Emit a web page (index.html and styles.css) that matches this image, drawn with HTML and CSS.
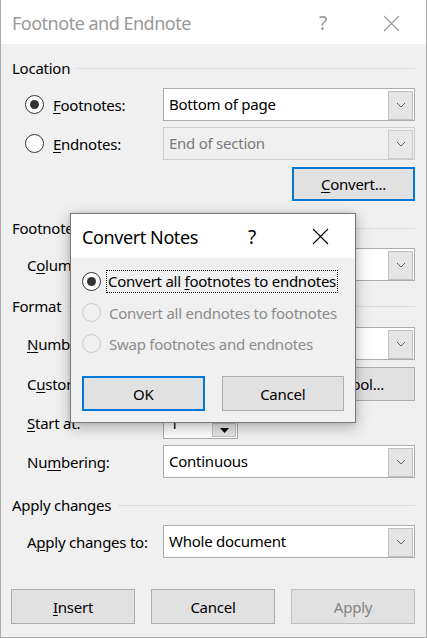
FILE: index.html
```html
<!DOCTYPE html>
<html>
<head>
<meta charset="utf-8">
<title>Footnote and Endnote</title>
<link rel="stylesheet" href="styles.css">
</head>
<body>
<div class="window">
  <div class="titlebar">
    <span class="title">Footnote and Endnote</span>
    <span class="tb-help">?</span>
    <span class="tb-close">
      <svg width="17" height="17" viewBox="0 0 17 17"><path d="M1 1 L16 16 M16 1 L1 16" stroke="#999" stroke-width="1.1" fill="none"/></svg>
    </span>
  </div>

  <div class="content">
    <div class="group-head first"><span class="gh-text">Location</span><span class="gh-line"></span></div>

    <div class="row">
      <div class="radio-label"><span class="radio checked"></span><span><u>F</u>ootnotes:</span></div>
      <div class="select">
        <span class="sel-text">Bottom of page</span>
        <span class="dd"><svg width="10" height="6" viewBox="0 0 10 6"><path d="M1 1 L5 5 L9 1" stroke="#606060" stroke-width="1" fill="none"/></svg></span>
      </div>
    </div>

    <div class="row r6">
      <div class="radio-label"><span class="radio"></span><span><u>E</u>ndnotes:</span></div>
      <div class="select disabled">
        <span class="sel-text">End of section</span>
        <span class="dd"><svg width="10" height="6" viewBox="0 0 10 6"><path d="M1 1 L5 5 L9 1" stroke="#606060" stroke-width="1" fill="none"/></svg></span>
      </div>
    </div>

    <div class="row-right r7">
      <button class="btn default convert"><u>C</u>onvert...</button>
    </div>

    <div class="group-head"><span class="gh-text">Footnote layout</span><span class="gh-line"></span></div>

    <div class="row">
      <div class="label">C<u>o</u>lumns:</div>
      <div class="select">
        <span class="sel-text">Match section layout</span>
        <span class="dd"><svg width="10" height="6" viewBox="0 0 10 6"><path d="M1 1 L5 5 L9 1" stroke="#606060" stroke-width="1" fill="none"/></svg></span>
      </div>
    </div>

    <div class="group-head g2"><span class="gh-text">Format</span><span class="gh-line"></span></div>

    <div class="row r11">
      <div class="label"><u>N</u>umber format:</div>
      <div class="select">
        <span class="sel-text">1, 2, 3, ...</span>
        <span class="dd"><svg width="10" height="6" viewBox="0 0 10 6"><path d="M1 1 L5 5 L9 1" stroke="#606060" stroke-width="1" fill="none"/></svg></span>
      </div>
    </div>

    <div class="row r7 tall">
      <div class="label">C<u>u</u>stom mark:</div>
      <div class="custom-field">
        <span class="text-input"></span>
        <button class="btn symbol"><u>S</u>ymbol...</button>
      </div>
    </div>

    <div class="row r5">
      <div class="label"><u>S</u>tart at:</div>
      <div class="field">
        <div class="spin">
          <span class="spin-text">1</span>
          <span class="spin-btns">
            <span class="spin-btn"><svg width="9" height="5" viewBox="0 0 9 5"><path d="M0 5 L4.5 0 L9 5 Z" fill="#000"/></svg></span>
            <span class="spin-btn"><svg width="9" height="5" viewBox="0 0 9 5"><path d="M0 0 L9 0 L4.5 5 Z" fill="#000"/></svg></span>
          </span>
        </div>
      </div>
    </div>

    <div class="row r6">
      <div class="label">Nu<u>m</u>bering:</div>
      <div class="select">
        <span class="sel-text">Continuous</span>
        <span class="dd"><svg width="10" height="6" viewBox="0 0 10 6"><path d="M1 1 L5 5 L9 1" stroke="#606060" stroke-width="1" fill="none"/></svg></span>
      </div>
    </div>

    <div class="group-head"><span class="gh-text">Apply changes</span><span class="gh-line"></span></div>

    <div class="row">
      <div class="label">A<u>p</u>ply changes to:</div>
      <div class="select">
        <span class="sel-text">Whole document</span>
        <span class="dd"><svg width="10" height="6" viewBox="0 0 10 6"><path d="M1 1 L5 5 L9 1" stroke="#606060" stroke-width="1" fill="none"/></svg></span>
      </div>
    </div>

    <div class="buttons">
      <button class="btn"><u>I</u>nsert</button>
      <button class="btn">Cancel</button>
      <button class="btn disabled">Apply</button>
    </div>
  </div>

  <div class="dialog">
    <div class="dlg-title">
      <span class="dlg-title-text">Convert Notes</span>
      <span class="dlg-help">?</span>
      <span class="dlg-close">
        <svg width="17" height="17" viewBox="0 0 17 17"><path d="M1 1 L16 16 M16 1 L1 16" stroke="#000" stroke-width="1.1" fill="none"/></svg>
      </span>
    </div>
    <div class="dlg-body">
      <div class="dlg-opt"><span class="radio checked"></span><span class="focus">Convert all <u>f</u>ootnotes to endnotes</span></div>
      <div class="dlg-opt dis"><span class="radio disabled"></span><span class="opt-text">Convert all endnotes to footnotes</span></div>
      <div class="dlg-opt dis"><span class="radio disabled"></span><span class="opt-text">Swap footnotes and endnotes</span></div>
      <div class="dlg-buttons">
        <button class="btn default">OK</button>
        <button class="btn">Cancel</button>
      </div>
    </div>
  </div>
</div>
</body>
</html>
```

FILE: styles.css
```css
* { box-sizing: border-box; }

html, body {
  margin: 0;
  padding: 0;
  background: #f0f0f0;
}

body {
  font-family: "Noto Sans", "Open Sans", sans-serif;
  font-size: 15px;
  letter-spacing: -0.25px;
  color: #000;
}

u { text-decoration: underline; text-underline-offset: 2px; text-decoration-thickness: 1px; }

.window {
  position: relative;
  width: 427px;
  height: 638px;
  background: #f0f0f0;
  border: 1px solid #ababab;
  border-top: none;
  overflow: hidden;
}

.titlebar {
  height: 44px;
  background: #fff;
  display: flex;
  align-items: center;
  padding-left: 11px;
  padding-top: 2px;
}

.title {
  font-size: 18px;
  color: #999;
  letter-spacing: -0.5px;
  flex: 1;
}

.tb-help {
  font-size: 19px;
  color: #999;
  width: 20px;
  text-align: center;
  margin-right: 50px;
}

.tb-close {
  width: 17px;
  height: 17px;
  margin-right: 26px;
  display: flex;
}

.content {
  padding: 0 11px 0 11px;
}

.group-head {
  display: flex;
  align-items: center;
  height: 20px;
  margin-top: 17px;
  margin-bottom: 10px;
}
.group-head.first { margin-top: 14px; }
.group-head.g2 { margin-top: 15px; margin-bottom: 11px; }

.gh-text { white-space: nowrap; }
.gh-line {
  flex: 1;
  height: 1px;
  background: #dcdcdc;
  margin-left: 7px;
}

.row {
  display: flex;
  align-items: center;
  height: 33px;
}
.row.tall { height: 34px; }
.r5 { margin-top: 5px; }
.r6 { margin-top: 6px; }
.r7 { margin-top: 7px; }
.r11 { margin-top: 0; }

.label {
  flex: 1;
  padding-left: 15px;
  white-space: nowrap;
}

.radio-label {
  flex: 1;
  display: flex;
  align-items: center;
  padding-left: 13px;
  gap: 9px;
}

.radio {
  width: 19px;
  height: 19px;
  border: 1px solid #333;
  border-radius: 50%;
  background: #fff;
  display: inline-flex;
  align-items: center;
  justify-content: center;
  flex: none;
}
.radio.checked::after {
  content: "";
  width: 9px;
  height: 9px;
  border-radius: 50%;
  background: #333;
}
.radio.disabled {
  border-color: #cccccc;
  background: #f0f0f0;
}

.select {
  width: 252px;
  height: 33px;
  background: #fff;
  border: 1px solid #adadad;
  display: flex;
  align-items: center;
  padding-left: 5px;
  padding-right: 1px;
}
.select.disabled {
  background: #f0f0f0;
  border-color: #cccccc;
  color: #7a7a7a;
}
.sel-text { flex: 1; white-space: nowrap; padding-bottom: 1px; }

.dd {
  width: 25px;
  height: 29px;
  background: #e5e5e5;
  border: 1px solid #c2c2c2;
  display: flex;
  align-items: center;
  justify-content: center;
  margin-top: 1px;
}
.select.disabled .dd { background: #e8e8e8; border-color: #cccccc; }

.row-right {
  display: flex;
  justify-content: flex-end;
}

.btn {
  font-family: inherit;
  font-size: 15px;
  letter-spacing: -0.25px;
  color: #000;
  background: #e1e1e1;
  border: 1px solid #adadad;
  height: 35px;
  width: 124px;
  padding: 0;
  margin: 0;
}
.btn.default {
  border: 2px solid #0078d7;
}
.btn.disabled {
  color: #838383;
  border-color: #bfbfbf;
  background: #e1e1e1;
}
.convert { width: 123px; height: 34px; }

.field {
  width: 252px;
}

.custom-field {
  width: 252px;
  display: flex;
  align-items: center;
  justify-content: space-between;
}
.text-input {
  width: 118px;
  height: 32px;
  background: #fff;
  border: 1px solid #adadad;
}
.symbol {
  width: 124px;
  height: 34px;
  white-space: nowrap;
}

.spin {
  width: 75px;
  height: 33px;
  background: #fff;
  border: 1px solid #adadad;
  display: flex;
  align-items: center;
  padding-left: 6px;
  padding-right: 1px;
}
.spin-text { flex: 1; }
.spin-btns {
  display: flex;
  flex-direction: column;
  gap: 1px;
  width: 24px;
}
.spin-btn {
  height: 14px;
  background: #e5e5e5;
  border: 1px solid #c2c2c2;
  display: flex;
  align-items: center;
  justify-content: center;
}

.buttons {
  display: flex;
  gap: 16px;
  margin-top: 31px;
  margin-left: -1px;
}

/* Convert Notes dialog */
.dialog {
  position: absolute;
  left: 69px;
  top: 213px;
  width: 286px;
  height: 210px;
  background: #f0f0f0;
  border: 1px solid #7a7a7a;
  box-shadow: 0 4px 14px rgba(0,0,0,0.28), 0 0 4px rgba(0,0,0,0.12);
}

.dlg-title {
  height: 44px;
  background: #fff;
  display: flex;
  align-items: center;
  padding-left: 11px;
  padding-top: 1px;
}
.dlg-title-text {
  flex: 1;
  font-size: 18px;
  letter-spacing: -0.4px;
}
.dlg-help {
  font-size: 19px;
  width: 20px;
  text-align: center;
  margin-right: 50px;
}
.dlg-close {
  width: 17px;
  height: 17px;
  margin-right: 26px;
  display: flex;
}

.dlg-body {
  padding: 8px 11px 0 11px;
}

.dlg-opt {
  height: 31px;
  display: flex;
  align-items: center;
  gap: 6px;
  white-space: nowrap;
}
.dlg-opt.dis { color: #8c8c8c; }
.focus {
  outline: 1px dotted #000;
  outline-offset: 0;
  padding: 0 1px 1px 1px;
}
.opt-text { padding-left: 2px; }

.dlg-buttons {
  display: flex;
  gap: 17px;
  margin-top: 17px;
}
.dlg-buttons .btn { width: 123px; }
```
